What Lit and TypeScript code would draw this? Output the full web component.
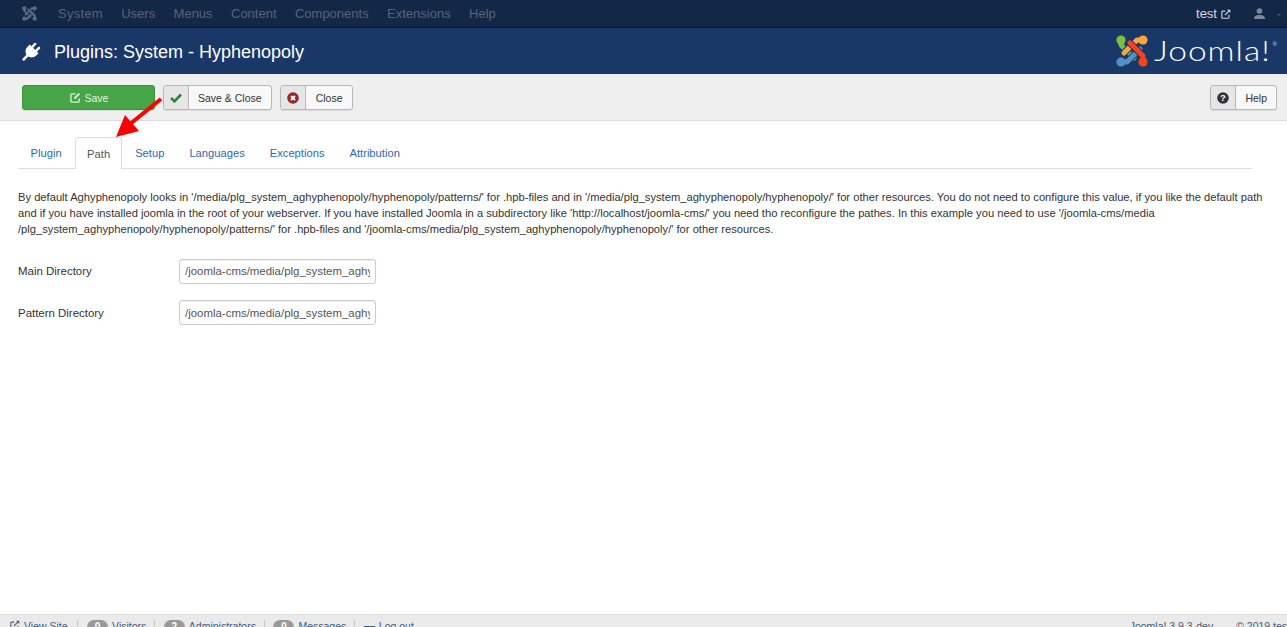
import { LitElement, html, css, svg } from "lit";
import { customElement } from "lit/decorators.js";

const extIcon = (size: number, color: string) => html`<svg class="ext" width=${size} height=${size} viewBox="0 0 12 12" fill="none" stroke=${color} stroke-width="1.3"><path d="M9.5 7v3.2a.8.8 0 0 1-.8.8H1.800a.8.8 0 0 1-.8-.8V3.300a.8.8 0 0 1 .8-.8H5"/><path d="M4.800 7.200 10 2"/><path d="M7.200 .8H11.200V4.800Z" fill=${color} stroke="none"/></svg>`;

const joomlaMark = (c: string[], w: number, bg: string) => {
  const bands = [
    "M5 5 V10 L18 23",
    "M27 5 H21 L8 18",
    "M5 27 H11 L24 14",
    "M27 27 V21 L14 8",
  ];
  const pts = [[5, 5], [27, 5], [5, 27], [27, 27]];
  return svg`
    ${bands.map((d, i) => svg`
      <path d=${d} fill="none" stroke=${bg} stroke-width=${w + 2} stroke-linejoin="round"/>
      <path d=${d} fill="none" stroke=${c[i]} stroke-width=${w} stroke-linecap="round" stroke-linejoin="round"/>
      <circle cx=${pts[i][0]} cy=${pts[i][1]} r="4.6" fill=${c[i]}/>`)}`;
};

@customElement("app-root")
export class AppRoot extends LitElement {
  static styles = css`
    :host {
      display: flex;
      flex-direction: column;
      position: relative;
      height: 627px;
      overflow: hidden;
      font-family: "Liberation Sans", Arial, sans-serif;
      font-size: 11.7px;
      color: #333;
      background: #fff;
    }
    .nav {
      height: 27px;
      flex: none;
      background: #132746;
      border-bottom: 1px solid #0c1a30;
      display: flex;
      align-items: center;
      padding-left: 22px;
      padding-right: 6px;
      font-size: 13px;
    }
    .nav .mark { flex: none; margin-right: 21px; }
    .menu { display: flex; gap: 18.4px; color: #596476; flex: 1; }
    .menu span:first-child { letter-spacing: .25px; }
    .user { color: #d5dae2; display: flex; align-items: center; gap: 4px; }
    .usericon { margin-left: 23px; display: flex; align-items: center; gap: 12px; }
    .caret { width: 0; height: 0; border: 2.5px solid transparent; border-top-color: #4c5a70; border-bottom: 0; margin-top: 3px; }
    .head {
      height: 46px;
      flex: none;
      background: #1a3867;
      display: flex;
      align-items: center;
      padding: 0 10px 0 22px;
      color: #fff;
    }
    .head h1 { margin: 2px 0 0 13px; font-size: 18px; font-weight: 400; flex: 1; line-height: 1; }
    .brand { display: flex; align-items: center; }
    .word {
      font-family: Lato, "Liberation Sans", sans-serif;
      font-weight: 300;
      font-size: 27.5px;
      line-height: 1;
      letter-spacing: .8px;
      margin-left: 6px;
      width: 118px;
      transform: scaleX(1.22);
      transform-origin: left center;
      white-space: nowrap;
    }
    .reg { font-size: 6px; align-self: flex-start; margin: 6px 0 0 1px; color: #cfd6e2; }
    .bar {
      height: 47px;
      box-sizing: border-box;
      flex: none;
      background: #efefef;
      border-bottom: 1px solid #dcdcdc;
      display: flex;
      align-items: center;
      padding: 1px 10px 0 22px;
      gap: 8px;
    }
    .btn {
      display: flex;
      height: 25px;
      box-sizing: border-box;
      border: 1px solid #b8b8b8;
      border-radius: 3px;
      background: #f8f8f8;
      font-size: 10.5px;
      color: #333;
      align-items: stretch;
      box-shadow: 0 1px 1px rgba(0,0,0,.08);
    }
    .btn .ic {
      width: 24px;
      background: #e6e6e6;
      border-right: 1px solid #b8b8b8;
      display: flex;
      align-items: center;
      justify-content: center;
      flex: none;
      border-radius: 2px 0 0 2px;
    }
    .btn .lb { display: flex; align-items: center; padding: 0 9px; }
    .btn .lb.wide { padding: 0 10px; }
    .btn.save {
      width: 133px;
      background: #46a546;
      border-color: #3f8f3f;
      color: #e4f2e4;
      justify-content: center;
      align-items: center;
      gap: 4px;
      padding-left: 1px;
    }
    .spacer { flex: 1; }
    .main { flex: 1; padding: 16px 35px 0 18px; min-height: 0; }
    .tabs {
      display: flex;
      height: 31px;
      border-bottom: 1px solid #ddd;
      font-size: 11.2px;
    }
    .tab { color: #2a69b8; padding: 0 12.5px; display: flex; align-items: center; height: 31px; box-sizing: border-box; }
    .tab.on {
      color: #555;
      background: #fff;
      height: 32px;
      border: 1px solid #ddd;
      border-bottom: 0;
      border-radius: 4px 4px 0 0;
      padding: 0 11px;
      margin: 0 .5px 0 1px;
    }
    .desc { margin: 20px 0 0; line-height: 16px; font-size: 11.18px; width: 1245px; white-space: nowrap; }
    .row { display: flex; align-items: center; height: 26px; margin-top: 15.5px; }
    .desc + .row { margin-top: 21px; }
    .row label { width: 161px; font-size: 11.45px; }
    .row input {
      width: 197px;
      height: 25px;
      box-sizing: border-box;
      border: 1px solid #ccc;
      border-radius: 3px;
      padding: 0 5px;
      margin: 0;
      font-family: inherit;
      font-size: 11.45px;
      color: #555;
      outline: none;
      box-shadow: inset 0 1px 1px rgba(0,0,0,.07);
    }
    .foot {
      height: 30px;
      flex: none;
      background: #eaeaea;
      border-top: 1px solid #dedede;
      margin-bottom: -17px;
      display: flex;
      padding: 5px 0 0 10px;
      font-size: 10.5px;
      color: #4b5b73;
      box-sizing: border-box;
      white-space: nowrap;
    }
    .fi { display: flex; align-items: flex-start; gap: 4px; height: 14px; padding-right: 8px; margin-right: 8.5px; border-right: 1px solid #c8c8c8; }
    .fi.first { padding-right: 9px; margin-right: 9.500px; }
    .fi.last { border: 0; }
    .dash { width: 11px; height: 3px; background: #4b5b73; margin-top: 6px; }
    .badge { background: #999; color: #fff; border-radius: 10px; width: 21px; height: 14px; font-size: 10px; font-weight: 700; text-align: center; line-height: 14px; }
    .fr { margin-left: auto; display: flex; gap: 23px; margin-right: -3px; }
    .arrow { position: absolute; left: 110px; top: 94px; }
  `;

  render() {
    const tabs = ["Plugin", "Path", "Setup", "Languages", "Exceptions", "Attribution"];
    const menus = ["System", "Users", "Menus", "Content", "Components", "Extensions", "Help"];
    return html`
      <div class="nav">
        <svg class="mark" width="15" height="15" viewBox="0 0 32 32">${joomlaMark(["#5d6b80", "#5d6b80", "#5d6b80", "#5d6b80"], 5, "#132746")}</svg>
        <div class="menu">${menus.map((m) => html`<span>${m}</span>`)}</div>
        <div class="user">test ${extIcon(10, "#d5dae2")}</div>
        <div class="usericon">
          <svg width="11" height="11" viewBox="0 0 11 11" fill="#7d8899"><circle cx="5.5" cy="3" r="2.800"/><path d="M0 11c0-3 2-4 5.500-4S11 8 11 11z"/></svg>
          <span class="caret"></span>
        </div>
      </div>
      <div class="head">
        <svg width="19" height="19" viewBox="-9.5 -12 21.5 21.5" fill="#fff">
          <g transform="rotate(45)">
            <rect x="-4.5" y="-12" width="2.800" height="7" rx="1.200"/>
            <rect x="1.700" y="-12" width="2.800" height="7" rx="1.200"/>
            <path d="M-7 -6H7V-2A7 7 0 0 1-7 -2Z"/>
            <rect x="-1.500" y="4" width="3" height="8"/>
          </g>
        </svg>
        <h1>Plugins: System - Hyphenopoly</h1>
        <div class="brand">
          <svg width="32" height="32" viewBox="0 0 32 32">${joomlaMark(["#7ac143", "#f9a541", "#5091cd", "#f44321"], 5, "#1a3867")}</svg>
          <span class="word">Joomla!</span><span class="reg">®</span>
        </div>
      </div>
      <div class="bar">
        <div class="btn save">
          <svg width="11" height="11" viewBox="0 0 12 12" fill="none" stroke="#e4f2e4" stroke-width="1.4"><path d="M10 7v3a1 1 0 0 1-1 1H2a1 1 0 0 1-1-1V3a1 1 0 0 1 1-1h4"/><path d="M4.500 5.800 9.500 1l1.500 1.500L6 7.300H4.500z" fill="#e4f2e4" stroke="none"/></svg>
          Save
        </div>
        <div class="btn">
          <span class="ic"><svg width="12" height="10" viewBox="0 0 12 10" fill="none" stroke="#378137" stroke-width="2.600"><path d="M1 5l3.500 3.300L11 1.500"/></svg></span>
          <span class="lb">Save &amp; Close</span>
        </div>
        <div class="btn">
          <span class="ic"><svg width="12" height="12" viewBox="0 0 12 12"><circle cx="6" cy="6" r="5.800" fill="#942a25"/><path d="M4 4l4 4M8 4l-4 4" stroke="#fff" stroke-width="1.800"/></svg></span>
          <span class="lb wide">Close</span>
        </div>
        <span class="spacer"></span>
        <div class="btn">
          <span class="ic"><svg width="12" height="12" viewBox="0 0 12 12"><circle cx="6" cy="6" r="5.800" fill="#333"/><text x="6" y="9.300" text-anchor="middle" fill="#fff" font-size="9.500" font-weight="700" font-family="Liberation Sans">?</text></svg></span>
          <span class="lb">Help</span>
        </div>
      </div>
      <div class="main">
        <div class="tabs">
          ${tabs.map((t) => html`<div class="tab ${t === "Path" ? "on" : ""}">${t}</div>`)}
        </div>
        <p class="desc">By default Aghyphenopoly looks in '/media/plg_system_aghyphenopoly/hyphenopoly/patterns/' for .hpb-files and in '/media/plg_system_aghyphenopoly/hyphenopoly/' for other resources. You do not need to configure this value, if you like the default path<br>and if you have installed joomla in the root of your webserver. If you have installed Joomla in a subdirectory like 'http://localhost/joomla-cms/' you need tho reconfigure the pathes. In this example you need to use '/joomla-cms/media<br>/plg_system_aghyphenopoly/hyphenopoly/patterns/' for .hpb-files and '/joomla-cms/media/plg_system_aghyphenopoly/hyphenopoly/' for other resources.</p>
        <div class="row"><label>Main Directory</label><input value="/joomla-cms/media/plg_system_aghyphenopoly/hyphenopoly/" /></div>
        <div class="row"><label>Pattern Directory</label><input value="/joomla-cms/media/plg_system_aghyphenopoly/hyphenopoly/patterns/" /></div>
      </div>
      <div class="foot">
        <div class="fi first">${extIcon(10, "#4b5b73")}<span>View Site</span></div>
        <div class="fi"><span class="badge">0</span><span>Visitors</span></div>
        <div class="fi"><span class="badge">2</span><span>Administrators</span></div>
        <div class="fi"><span class="badge">0</span><span>Messages</span></div>
        <div class="fi last"><span class="dash"></span><span>Log out</span></div>
        <div class="fr"><span>Joomla! 3.9.3-dev</span><span>© 2019 test</span></div>
      </div>
      <svg class="arrow" width="56" height="48" viewBox="0 0 56 48">
        <path d="M51 5 L20 30" stroke="#f00" stroke-width="4"/>
        <path d="M6 43 L15 21 L29 37 Z" fill="#f00"/>
      </svg>
    `;
  }
}
